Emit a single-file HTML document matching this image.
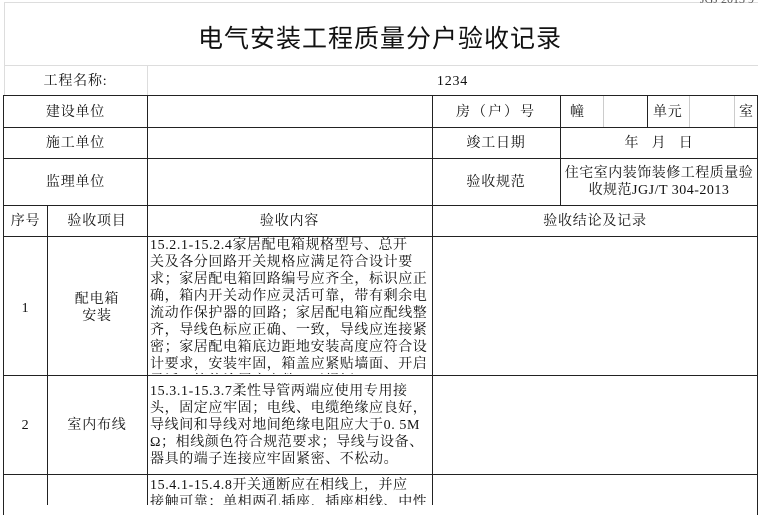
<!DOCTYPE html>
<html><head><meta charset="utf-8"><style>
body{margin:0;width:760px;height:505px;overflow:hidden;background:#fff;font-family:"Liberation Serif","Noto Serif CJK SC","Noto Sans CJK SC",serif;color:#111;position:relative}
.a{position:absolute}
.h{position:absolute;height:0;border-top:1px solid #222}
.v{position:absolute;width:0;border-left:1px solid #222}
.t{position:absolute;font-size:14px;text-align:center;white-space:nowrap;line-height:17px;letter-spacing:0.8px}
.c{position:absolute;font-size:14px;line-height:17px;white-space:nowrap;overflow:hidden;left:150px;width:281px;letter-spacing:0.6px}
</style></head><body>
<div class="a" style="left:4px;top:2px;width:754px;border-top:1px solid #ddd"></div>
<div class="a" style="left:4px;top:2px;height:94px;border-left:1px solid #ddd"></div>
<div class="a" style="left:700px;top:-8px;font-size:12px;color:#555">JGJ 2013 9</div>
<div class="t" style="left:0;width:760px;top:22px;font-size:25px;line-height:30px;letter-spacing:1px;font-family:'Noto Sans CJK SC',sans-serif">电气安装工程质量分户验收记录</div>
<div class="a" style="left:4px;top:65px;width:754px;border-top:1px solid #ddd"></div>
<div class="a" style="left:147px;top:65px;height:31px;border-left:1px solid #ddd"></div>
<div class="t" style="left:4px;width:143px;top:73px">工程名称:</div>
<div class="t" style="left:147px;width:611px;top:73px">1234</div>
<div class="a" style="left:3px;top:95px;width:755px;height:420px;border:1.5px solid #222;border-bottom:none;box-sizing:border-box"></div>
<div class="h" style="left:4px;width:754px;top:127px"></div>
<div class="h" style="left:4px;width:754px;top:158px"></div>
<div class="h" style="left:4px;width:754px;top:205px"></div>
<div class="h" style="left:4px;width:754px;top:236px"></div>
<div class="h" style="left:4px;width:754px;top:375px"></div>
<div class="h" style="left:4px;width:754px;top:474px"></div>
<div class="v" style="left:47px;top:205px;height:300px"></div>
<div class="v" style="left:147px;top:96px;height:409px"></div>
<div class="v" style="left:432px;top:96px;height:409px"></div>
<div class="v" style="left:560px;top:96px;height:109px"></div>
<div class="v" style="left:603px;top:96px;height:31px;border-color:#ccc"></div>
<div class="v" style="left:647px;top:96px;height:31px"></div>
<div class="v" style="left:689px;top:96px;height:31px;border-color:#ccc"></div>
<div class="v" style="left:734px;top:96px;height:31px;border-color:#ccc"></div>
<div class="t" style="left:4px;width:143px;top:104px">建设单位</div>
<div class="t" style="left:4px;width:143px;top:135px">施工单位</div>
<div class="t" style="left:4px;width:143px;top:174px">监理单位</div>
<div class="t" style="left:432px;width:128px;top:104px;letter-spacing:2px">房（户）号</div>
<div class="t" style="left:570px;top:104px">幢</div>
<div class="t" style="left:653px;top:104px">单元</div>
<div class="t" style="left:739px;top:104px">室</div>
<div class="t" style="left:432px;width:128px;top:135px">竣工日期</div>
<div class="t" style="left:560px;width:198px;top:135px;word-spacing:8px">年 月 日</div>
<div class="t" style="left:432px;width:128px;top:174px">验收规范</div>
<div class="t" style="left:560px;width:198px;top:165px;letter-spacing:0.5px">住宅室内装饰装修工程质量验<br>收规范JGJ/T 304-2013</div>
<div class="t" style="left:4px;width:43px;top:213px">序号</div>
<div class="t" style="left:47px;width:100px;top:213px">验收项目</div>
<div class="t" style="left:147px;width:285px;top:213px">验收内容</div>
<div class="t" style="left:432px;width:326px;top:213px">验收结论及记录</div>
<div class="t" style="left:4px;width:43px;top:300px">1</div>
<div class="t" style="left:47px;width:100px;top:291px">配电箱<br>安装</div>
<div class="c" style="top:237px;height:137px">15.2.1-15.2.4家居配电箱规格型号、总开<br>关及各分回路开关规格应满足符合设计要<br>求；家居配电箱回路编号应齐全，标识应正<br>确，箱内开关动作应灵活可靠，带有剩余电<br>流动作保护器的回路；家居配电箱应配线整<br>齐，导线色标应正确、一致，导线应连接紧<br>密；家居配电箱底边距地安装高度应符合设<br>计要求，安装牢固，箱盖应紧贴墙面、开启<br>灵活，箱体涂层应完整，无损坏。</div>
<div class="t" style="left:4px;width:43px;top:417px">2</div>
<div class="t" style="left:47px;width:100px;top:417px">室内布线</div>
<div class="c" style="top:383px">15.3.1-15.3.7柔性导管两端应使用专用接<br>头，固定应牢固；电线、电缆绝缘应良好，<br>导线间和导线对地间绝缘电阻应大于0. 5M<br>Ω；相线颜色符合规范要求；导线与设备、<br>器具的端子连接应牢固紧密、不松动。</div>
<div class="c" style="top:477px;height:28px">15.4.1-15.4.8开关通断应在相线上，并应<br>接触可靠；单相两孔插座，插座相线、中性</div>
</body></html>
